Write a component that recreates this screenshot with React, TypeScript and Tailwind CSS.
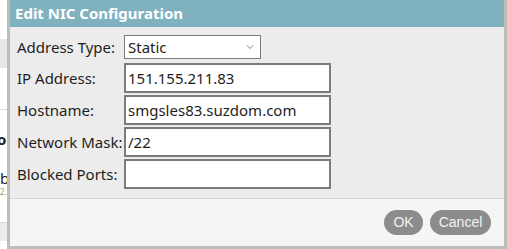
import { ChevronDown } from "lucide-react";

const font = { fontFamily: '"Noto Sans", "Open Sans", sans-serif' };

function Field({ label, value }: { label: string; value: string }) {
  return (
    <div className="flex h-[30px] items-center">
      <span className="w-[107px] shrink-0 whitespace-nowrap text-[15px] text-[#1e1e1e]">{label}</span>
      <div className="flex h-[30px] w-[207px] items-center border-2 border-[#7b7b7b] bg-white px-[2px] text-[15px] text-[#1e1e1e]">
        {value}
      </div>
    </div>
  );
}

export default function App() {
  return (
    <div className="relative h-[249px] w-[507px] overflow-hidden bg-white" style={font}>
      {/* page behind the dialog */}
      <div className="flex h-full flex-col">
        <div className="h-[39px] bg-white" />
        <div className="h-[29px] bg-[#e8e8e8]" />
        <div className="h-[42px] border-b border-[#dcdcdc] bg-white" />
        <div className="flex h-[112px] flex-col bg-white pt-[22px] text-[15px] leading-none text-[#1e1e1e]">
          <span className="-ml-[3px] font-bold">or</span>
          <span className="mt-[24px]">b</span>
          <span className="mt-[2px] text-[8px] leading-none text-[#b08c6a]">2.</span>
        </div>
        <div className="h-[19px] border-t border-[#dcdcdc] bg-[#ececec]" />
        <div className="flex-1 bg-white" />
      </div>

      {/* dialog */}
      <div className="absolute left-[7px] top-0 flex h-[249px] w-[500px] flex-col border-x-[3px] border-b-[3px] border-[#bcbfb8]">
        <div className="flex h-[27px] items-center bg-[#7fb1bf] px-[5px] text-[15px] font-bold text-white">
          Edit NIC Configuration
        </div>
        <div className="flex h-[172px] flex-col gap-[2px] border-b border-[#d2d2d2] bg-[#ececec] px-[7px] pt-[8px]">
          <div className="mb-[2px] flex h-[24px] items-center">
            <span className="w-[107px] shrink-0 text-[15px] text-[#1e1e1e]">Address Type:</span>
            <div className="flex h-[24px] w-[137px] items-center justify-between border-[1.5px] border-[#7b7b7b] bg-white pl-[3px] pr-[4px] text-[15px] text-[#1e1e1e]">
              <span>Static</span>
              <ChevronDown size={12} strokeWidth={1.5} className="text-[#555]" />
            </div>
          </div>
          <Field label="IP Address:" value="151.155.211.83" />
          <Field label="Hostname:" value="smgsles83.suzdom.com" />
          <Field label="Network Mask:" value="/22" />
          <Field label="Blocked Ports:" value="" />
        </div>
        <div className="flex flex-1 items-center justify-end gap-[7px] bg-[#f5f5f5] pr-[13px]" style={{ fontFamily: '"Liberation Sans", Arial, sans-serif' }}>
          <button className="h-[25px] w-[39px] rounded-full bg-[#8c8c8c] text-[14px] text-[#f2f2f2]">OK</button>
          <button className="h-[25px] w-[61px] rounded-full bg-[#8c8c8c] text-[14px] text-[#f2f2f2]">Cancel</button>
        </div>
      </div>
    </div>
  );
}
